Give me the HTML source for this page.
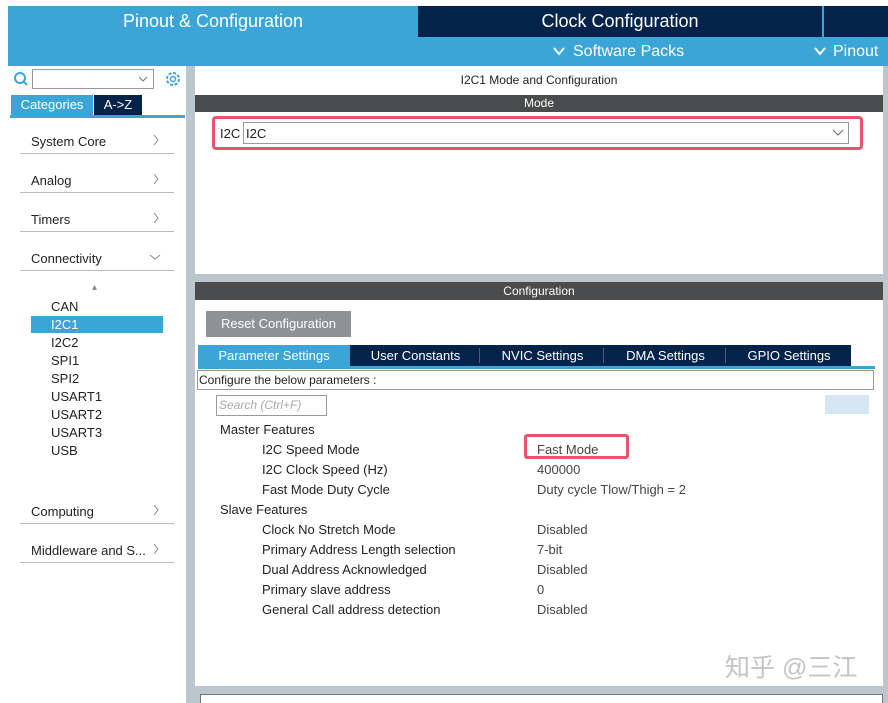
<!DOCTYPE html>
<html><head><meta charset="utf-8"><style>
*{margin:0;padding:0;box-sizing:border-box}
body{width:888px;height:703px;position:relative;background:#fff;font-family:"Liberation Sans","Noto Sans CJK SC",sans-serif;overflow:hidden;color:#222}
.a{position:absolute}
.t{font-size:13px;white-space:nowrap}
</style></head><body>
<div class="a" style="left:8px;top:6px;width:880px;height:60px;background:#3ba5d8"></div>
<div class="a" style="left:418px;top:6px;width:404px;height:31px;background:#03234b"></div>
<div class="a" style="left:824px;top:6px;width:64px;height:31px;background:#03234b"></div>
<div class="a" style="left:8px;top:11px;width:410px;text-align:center;color:#fff;font-size:18px">Pinout &amp; Configuration</div>
<div class="a" style="left:418px;top:11px;width:404px;text-align:center;color:#fff;font-size:18px">Clock Configuration</div>
<svg class="a" style="left:553px;top:46px" width="12" height="10"><path d="M1 2 L6 8 L11 2" fill="none" stroke="#fff" stroke-width="2"/></svg>
<div class="a" style="left:573px;top:43px;color:#fff;font-size:16px">Software Packs</div>
<svg class="a" style="left:814px;top:46px" width="12" height="10"><path d="M1 2 L6 8 L11 2" fill="none" stroke="#fff" stroke-width="2"/></svg>
<div class="a" style="left:833px;top:43px;color:#fff;font-size:16px">Pinout</div>

<!-- sidebar -->
<div class="a" style="left:8px;top:66px;width:178px;height:637px;background:#fff"></div>
<div class="a" style="left:186px;top:66px;width:9px;height:637px;background:#bcc6cd"></div>
<svg class="a" style="left:13px;top:71px" width="16" height="16"><circle cx="7" cy="7" r="5" fill="none" stroke="#3ba5d8" stroke-width="2"/><line x1="10.5" y1="10.5" x2="14" y2="14" stroke="#3ba5d8" stroke-width="2"/></svg>
<div class="a" style="left:32px;top:69px;width:122px;height:20px;border:1px solid #999;background:#fff"></div>
<svg class="a" style="left:138px;top:75px" width="10" height="8"><path d="M1 2 L5 6 L9 2" fill="none" stroke="#777" stroke-width="1"/></svg>
<svg class="a" style="left:164px;top:70px" width="18" height="18"><circle cx="9" cy="9" r="6" fill="none" stroke="#3ba5d8" stroke-width="2" stroke-dasharray="3 1.7"/><circle cx="9" cy="9" r="2.5" fill="none" stroke="#3ba5d8" stroke-width="1.5"/></svg>
<div class="a" style="left:11px;top:95px;width:82px;height:20px;background:#3ba5d8;color:#fff;font-size:13px;text-align:center;line-height:20px">Categories</div>
<div class="a" style="left:94px;top:95px;width:48px;height:20px;background:#03234b;color:#fff;font-size:13px;text-align:center;line-height:20px">A-&gt;Z</div>
<div class="a" style="left:10px;top:115px;width:175px;height:3px;background:#3ba5d8"></div>

<div class="a t" style="left:31px;top:134px">System Core</div><svg class="a" style="left:152px;top:134px" width="8" height="12"><path d="M2 1 L6 6 L2 11" fill="none" stroke="#888"/></svg>
<div class="a" style="left:20px;top:153px;width:154px;height:1px;background:#bbb"></div>
<div class="a t" style="left:31px;top:173px">Analog</div><svg class="a" style="left:152px;top:173px" width="8" height="12"><path d="M2 1 L6 6 L2 11" fill="none" stroke="#888"/></svg>
<div class="a" style="left:20px;top:192px;width:154px;height:1px;background:#bbb"></div>
<div class="a t" style="left:31px;top:212px">Timers</div><svg class="a" style="left:152px;top:212px" width="8" height="12"><path d="M2 1 L6 6 L2 11" fill="none" stroke="#888"/></svg>
<div class="a" style="left:20px;top:231px;width:154px;height:1px;background:#bbb"></div>
<div class="a t" style="left:31px;top:251px">Connectivity</div><svg class="a" style="left:149px;top:253px" width="12" height="8"><path d="M1 2 L6 6 L11 2" fill="none" stroke="#888"/></svg>
<div class="a" style="left:20px;top:270px;width:154px;height:1px;background:#bbb"></div>
<div class="a" style="left:92px;top:282px;font-size:10px;color:#888">▴</div>
<div class="a t" style="left:51px;top:299px">CAN</div>
<div class="a" style="left:31px;top:316px;width:132px;height:17px;background:#3ba5d8"></div>
<div class="a t" style="left:51px;top:317px;color:#fff">I2C1</div>
<div class="a t" style="left:51px;top:335px">I2C2</div>
<div class="a t" style="left:51px;top:353px">SPI1</div>
<div class="a t" style="left:51px;top:371px">SPI2</div>
<div class="a t" style="left:51px;top:389px">USART1</div>
<div class="a t" style="left:51px;top:407px">USART2</div>
<div class="a t" style="left:51px;top:425px">USART3</div>
<div class="a t" style="left:51px;top:443px">USB</div>
<div class="a t" style="left:31px;top:504px">Computing</div><svg class="a" style="left:152px;top:504px" width="8" height="12"><path d="M2 1 L6 6 L2 11" fill="none" stroke="#888"/></svg>
<div class="a" style="left:20px;top:523px;width:154px;height:1px;background:#bbb"></div>
<div class="a t" style="left:31px;top:543px">Middleware and S...</div><svg class="a" style="left:152px;top:543px" width="8" height="12"><path d="M2 1 L6 6 L2 11" fill="none" stroke="#888"/></svg>
<div class="a" style="left:20px;top:562px;width:154px;height:1px;background:#bbb"></div>

<!-- right -->
<div class="a" style="left:195px;top:66px;width:693px;height:637px;background:#bcc6cd"></div>
<div class="a" style="left:195px;top:66px;width:688px;height:208px;background:#fff"></div>
<div class="a" style="left:195px;top:73px;width:688px;text-align:center;font-size:12px">I2C1 Mode and Configuration</div>
<div class="a" style="left:195px;top:95px;width:688px;height:17px;background:#4a4b4c;color:#fff;font-size:12px;text-align:center;line-height:17px">Mode</div>
<div class="a" style="left:212px;top:116px;width:651px;height:34px;border:3px solid #e3566c;border-radius:4px"></div>
<div class="a t" style="left:220px;top:126px">I2C</div>
<div class="a" style="left:243px;top:122px;width:606px;height:22px;border:1px solid #999"></div>
<div class="a t" style="left:246px;top:126px">I2C</div>
<svg class="a" style="left:832px;top:129px" width="12" height="8"><path d="M1 1 L6 6 L11 1" fill="none" stroke="#666"/></svg>

<div class="a" style="left:195px;top:282px;width:688px;height:404px;background:#fff"></div>
<div class="a" style="left:195px;top:282px;width:688px;height:18px;background:#4a4b4c;color:#fff;font-size:12px;text-align:center;line-height:18px">Configuration</div>
<div class="a" style="left:206px;top:311px;width:145px;height:26px;background:#8e9295;color:#fff;font-size:13px;line-height:26px;text-align:center">Reset Configuration</div>
<div class="a" style="left:198px;top:345px;width:653px;height:21px;background:#03234b"></div>
<div class="a" style="left:198px;top:345px;width:152px;height:21px;background:#3ba5d8"></div>
<div class="a" style="left:198px;top:366px;width:677px;height:3px;background:#3ba5d8"></div>
<div class="a t" style="left:198px;top:348px;width:152px;text-align:center;color:#fff">Parameter Settings</div>
<div class="a t" style="left:352px;top:348px;width:128px;text-align:center;color:#fff;border-right:1px solid #557">User Constants</div>
<div class="a t" style="left:482px;top:348px;width:122px;text-align:center;color:#fff;border-right:1px solid #557">NVIC Settings</div>
<div class="a t" style="left:606px;top:348px;width:120px;text-align:center;color:#fff;border-right:1px solid #557">DMA Settings</div>
<div class="a t" style="left:728px;top:348px;width:122px;text-align:center;color:#fff">GPIO Settings</div>
<div class="a" style="left:197px;top:370px;width:677px;height:20px;border:1px solid #999"></div>
<div class="a" style="left:199px;top:373px;font-size:12px">Configure the below parameters :</div>
<div class="a" style="left:216px;top:395px;width:111px;height:21px;border:1px solid #999"></div>
<div class="a" style="left:219px;top:398px;font-size:12px;color:#aaa;font-style:italic">Search (Ctrl+F)</div>
<div class="a" style="left:825px;top:395px;width:44px;height:19px;background:#d6e6f4"></div>

<div class="a t" style="left:220px;top:422px">Master Features</div>
<div class="a t" style="left:262px;top:442px">I2C Speed Mode</div><div class="a t" style="left:537px;top:442px;color:#444">Fast Mode</div>
<div class="a" style="left:524px;top:434px;width:105px;height:25px;border:3px solid #e3566c;border-radius:3px"></div>
<div class="a t" style="left:262px;top:462px">I2C Clock Speed (Hz)</div><div class="a t" style="left:537px;top:462px;color:#444">400000</div>
<div class="a t" style="left:262px;top:482px">Fast Mode Duty Cycle</div><div class="a t" style="left:537px;top:482px;color:#444">Duty cycle Tlow/Thigh = 2</div>
<div class="a t" style="left:220px;top:502px">Slave Features</div>
<div class="a t" style="left:262px;top:522px">Clock No Stretch Mode</div><div class="a t" style="left:537px;top:522px;color:#444">Disabled</div>
<div class="a t" style="left:262px;top:542px">Primary Address Length selection</div><div class="a t" style="left:537px;top:542px;color:#444">7-bit</div>
<div class="a t" style="left:262px;top:562px">Dual Address Acknowledged</div><div class="a t" style="left:537px;top:562px;color:#444">Disabled</div>
<div class="a t" style="left:262px;top:582px">Primary slave address</div><div class="a t" style="left:537px;top:582px;color:#444">0</div>
<div class="a t" style="left:262px;top:602px">General Call address detection</div><div class="a t" style="left:537px;top:602px;color:#444">Disabled</div>
<div class="a" style="left:725px;top:648px;font-size:25px;color:#c4c4c4;white-space:nowrap">知乎 @三江</div>
<div class="a" style="left:200px;top:694px;width:683px;height:9px;background:#fff;border:1px solid #777;border-bottom:none"></div>
</body></html>
